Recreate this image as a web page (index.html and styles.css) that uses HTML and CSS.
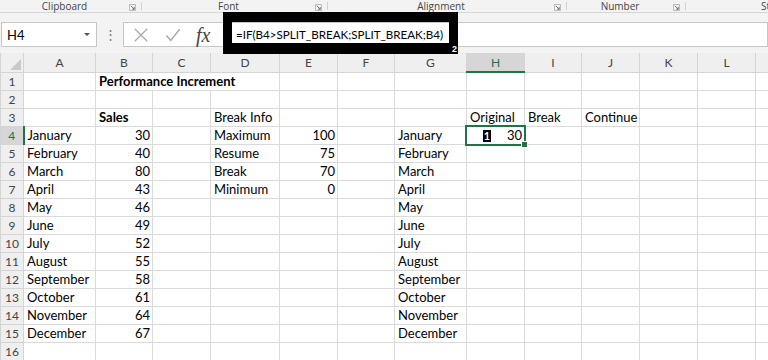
FILE: index.html
```html
<!DOCTYPE html>
<html lang="en">
  <head>
    <meta charset="UTF-8" />
    <meta name="viewport" content="width=device-width, initial-scale=1.0" />
    <title>Performance Increment - Excel</title>
    <link rel="stylesheet" href="styles.css">
  </head>
  <body>
    <div class="ribbon-labels">
      <div class="group group-clipboard">
        <span class="group-label">Clipboard</span>
        <svg class="launcher" viewBox="0 0 8 8"><path d="M0.5 0.5h7v7h-7z" fill="none" stroke="#b0b0b0"/><path d="M2 2l4 4M6 3.5v2.5h-2.5" fill="none" stroke="#666"/></svg>
      </div>
      <div class="group group-font">
        <span class="group-label">Font</span>
        <svg class="launcher" viewBox="0 0 8 8"><path d="M0.5 0.5h7v7h-7z" fill="none" stroke="#b0b0b0"/><path d="M2 2l4 4M6 3.5v2.5h-2.5" fill="none" stroke="#666"/></svg>
      </div>
      <div class="group group-alignment">
        <span class="group-label">Alignment</span>
        <svg class="launcher" viewBox="0 0 8 8"><path d="M0.5 0.5h7v7h-7z" fill="none" stroke="#b0b0b0"/><path d="M2 2l4 4M6 3.5v2.5h-2.5" fill="none" stroke="#666"/></svg>
      </div>
      <div class="group group-number">
        <span class="group-label">Number</span>
        <svg class="launcher" viewBox="0 0 8 8"><path d="M0.5 0.5h7v7h-7z" fill="none" stroke="#b0b0b0"/><path d="M2 2l4 4M6 3.5v2.5h-2.5" fill="none" stroke="#666"/></svg>
      </div>
      <div class="group group-styles">
        <span class="group-label">Styles</span>
      </div>
    </div>

    <div class="formula-row">
      <div class="name-box">
        <span>H4</span>
        <span class="name-arrow"></span>
      </div>
      <div class="grip">&#8942;</div>
      <div class="fx-buttons">
        <svg class="fx-icon" viewBox="0 0 18 18"><path d="M2 2l14 14M16 2L2 16" stroke="#a8a8a8" stroke-width="1.4" fill="none"/></svg>
        <svg class="fx-icon" viewBox="0 0 18 18"><path d="M1.5 9.5l5 5.5L16.5 2.5" stroke="#a8a8a8" stroke-width="1.6" fill="none"/></svg>
        <span class="fx-text">fx</span>
      </div>
      <div class="formula-input">=IF(B4&gt;SPLIT_BREAK;SPLIT_BREAK;B4)</div>
      <div class="callout"><span class="callout-num">2</span></div>
    </div>

    <div class="sheet-wrap">
      <table class="sheet">
        <colgroup>
          <col class="c-head" />
          <col style="width:72px" />
          <col style="width:57px" />
          <col style="width:58px" />
          <col style="width:69px" />
          <col style="width:58px" />
          <col style="width:57px" />
          <col style="width:72px" />
          <col style="width:58px" />
          <col style="width:57px" />
          <col style="width:58px" />
          <col style="width:58px" />
          <col style="width:58px" />
          <col style="width:58px" />
        </colgroup>
        <tr class="col-heads">
          <th class="corner"><span class="corner-tri"></span></th>
          <th>A</th><th>B</th><th>C</th><th>D</th><th>E</th><th>F</th><th>G</th>
          <th class="active">H</th><th>I</th><th>J</th><th>K</th><th>L</th><th>M</th>
        </tr>
        <tr>
          <th>1</th><td></td><td colspan="3" class="bold">Performance Increment</td><td></td><td></td><td></td><td></td><td></td><td></td><td></td><td></td><td></td>
        </tr>
        <tr>
          <th>2</th><td></td><td></td><td></td><td></td><td></td><td></td><td></td><td></td><td></td><td></td><td></td><td></td><td></td>
        </tr>
        <tr>
          <th>3</th><td></td><td class="bold">Sales</td><td></td><td>Break Info</td><td></td><td></td><td></td><td>Original</td><td>Break</td><td>Continue</td><td></td><td></td><td></td>
        </tr>
        <tr>
          <th class="active">4</th><td>January</td><td class="num">30</td><td></td><td>Maximum</td><td class="num">100</td><td></td><td>January</td>
          <td class="num selected">30<span class="marker">1</span><span class="sel-box"><span class="sel-handle"></span></span></td><td></td><td></td><td></td><td></td><td></td>
        </tr>
        <tr>
          <th>5</th><td>February</td><td class="num">40</td><td></td><td>Resume</td><td class="num">75</td><td></td><td>February</td><td></td><td></td><td></td><td></td><td></td><td></td>
        </tr>
        <tr>
          <th>6</th><td>March</td><td class="num">80</td><td></td><td>Break</td><td class="num">70</td><td></td><td>March</td><td></td><td></td><td></td><td></td><td></td><td></td>
        </tr>
        <tr>
          <th>7</th><td>April</td><td class="num">43</td><td></td><td>Minimum</td><td class="num">0</td><td></td><td>April</td><td></td><td></td><td></td><td></td><td></td><td></td>
        </tr>
        <tr>
          <th>8</th><td>May</td><td class="num">46</td><td></td><td></td><td></td><td></td><td>May</td><td></td><td></td><td></td><td></td><td></td><td></td>
        </tr>
        <tr>
          <th>9</th><td>June</td><td class="num">49</td><td></td><td></td><td></td><td></td><td>June</td><td></td><td></td><td></td><td></td><td></td><td></td>
        </tr>
        <tr>
          <th>10</th><td>July</td><td class="num">52</td><td></td><td></td><td></td><td></td><td>July</td><td></td><td></td><td></td><td></td><td></td><td></td>
        </tr>
        <tr>
          <th>11</th><td>August</td><td class="num">55</td><td></td><td></td><td></td><td></td><td>August</td><td></td><td></td><td></td><td></td><td></td><td></td>
        </tr>
        <tr>
          <th>12</th><td>September</td><td class="num">58</td><td></td><td></td><td></td><td></td><td>September</td><td></td><td></td><td></td><td></td><td></td><td></td>
        </tr>
        <tr>
          <th>13</th><td>October</td><td class="num">61</td><td></td><td></td><td></td><td></td><td>October</td><td></td><td></td><td></td><td></td><td></td><td></td>
        </tr>
        <tr>
          <th>14</th><td>November</td><td class="num">64</td><td></td><td></td><td></td><td></td><td>November</td><td></td><td></td><td></td><td></td><td></td><td></td>
        </tr>
        <tr>
          <th>15</th><td>December</td><td class="num">67</td><td></td><td></td><td></td><td></td><td>December</td><td></td><td></td><td></td><td></td><td></td><td></td>
        </tr>
        <tr>
          <th>16</th><td></td><td></td><td></td><td></td><td></td><td></td><td></td><td></td><td></td><td></td><td></td><td></td><td></td>
        </tr>
      </table>
    </div>
  </body>
</html>
```

FILE: styles.css
```css
body {
  margin: 0;
  width: 768px;
  height: 360px;
  overflow: hidden;
  background-color: #f3f3f3;
  font-family: Lato, "Liberation Sans", sans-serif;
  color: #000;
}
.ribbon-labels {
  display: flex;
  height: 12px;
  border-bottom: 1px solid #d6d6d6;
  font-family: "Open Sans", "Liberation Sans", sans-serif;
  font-size: 10px;
  color: #444;
  white-space: nowrap;
}
.group {
  display: flex;
  align-items: center;
  flex-shrink: 0;
  height: 12px;
  padding-right: 6px;
  box-sizing: border-box;
  position: relative;
}
.group::after {
  content: "";
  position: absolute;
  right: 0;
  top: 2px;
  height: 8px;
  border-right: 1px solid #d0d0d0;
}
.group-label {
  flex: 1;
  text-align: center;
  line-height: 12px;
}
.launcher {
  width: 7px;
  height: 7px;
  margin-top: 2px;
}
.group-clipboard { width: 142px; }
.group-font { width: 186px; }
.group-alignment { width: 239px; }
.group-number { width: 119px; }
.group-styles {
  padding-left: 75px;
}
.group-styles::after {
  display: none;
}
.formula-row {
  position: relative;
  display: flex;
  align-items: flex-start;
  height: 40px;
  padding-top: 9px;
  box-sizing: border-box;
}
.name-box {
  display: flex;
  align-items: center;
  justify-content: space-between;
  width: 96px;
  height: 25px;
  margin-left: 1px;
  padding: 0 6px 0 5px;
  box-sizing: border-box;
  background-color: #fff;
  border: 1px solid #c6c6c6;
  font-size: 13px;
}
.name-arrow {
  width: 0;
  height: 0;
  border-left: 3px solid transparent;
  border-right: 3px solid transparent;
  border-top: 3px solid #555;
}
.grip {
  width: 26px;
  text-align: center;
  color: #777;
  font-size: 13px;
  line-height: 25px;
}
.fx-buttons {
  display: flex;
  align-items: center;
  gap: 16px;
  width: 100px;
  height: 25px;
  padding-left: 9px;
  box-sizing: border-box;
  background-color: #fff;
  border: 1px solid #c6c6c6;
  border-right: none;
}
.fx-icon {
  width: 16px;
  height: 16px;
}
.fx-text {
  font-family: "Liberation Serif", serif;
  font-style: italic;
  font-size: 20px;
  color: #444;
  line-height: 20px;
  margin-left: -1px;
}
.formula-input {
  flex: 1;
  height: 23px;
  padding-left: 12px;
  border: 1px solid #c6c6c6;
  background-color: #fff;
  font-size: 11.6px;
  line-height: 23px;
  white-space: nowrap;
}
.callout {
  position: absolute;
  left: 223px;
  top: -1px;
  width: 217px;
  height: 21px;
  border-style: solid;
  border-color: #000;
  border-width: 10px 9px 11px 9px;
}
.callout-num {
  position: absolute;
  right: -8px;
  bottom: -11px;
  color: #fff;
  font-family: "Liberation Sans", sans-serif;
  font-weight: bold;
  font-size: 9px;
  line-height: 10px;
}
.sheet-wrap {
  width: 768px;
  overflow: hidden;
}
.sheet {
  border-collapse: collapse;
  table-layout: fixed;
  width: 812px;
  background-color: #fff;
  font-size: 13px;
}
.c-head {
  width: 23px;
}
.sheet th {
  background-color: #efefef;
  border: 1px solid #d4d4d4;
  font-weight: normal;
  font-size: 12px;
  color: #444;
  padding: 0;
  height: 17px;
  line-height: 17px;
  text-align: center;
}
.col-heads th {
  height: 18px;
  border-top: none;
}
.sheet th.active {
  background-color: #d6d6d6;
  color: #217346;
}
tr th.active {
  border-right: 2px solid #217346;
}
.col-heads th.active {
  border-right: 1px solid #d4d4d4;
  border-bottom: 2px solid #217346;
}
.corner {
  position: relative;
}
.corner-tri {
  position: absolute;
  right: 2px;
  bottom: 2px;
  width: 0;
  height: 0;
  border-left: 11px solid transparent;
  border-bottom: 11px solid #c9c9c9;
}
.sheet td {
  border: 1px solid #dadada;
  height: 17px;
  padding: 0 3px;
  line-height: 17px;
  vertical-align: bottom;
  white-space: nowrap;
}
.sheet td.num {
  text-align: right;
  padding-right: 2px;
}
.sheet td.bold {
  font-weight: bold;
}
.selected {
  position: relative;
}
.sel-box {
  position: absolute;
  left: -2px;
  top: -2px;
  right: -2px;
  bottom: -2px;
  border: 2px solid #217346;
}
.sel-handle {
  position: absolute;
  right: -4px;
  bottom: -4px;
  width: 5px;
  height: 5px;
  background-color: #217346;
  border: 1px solid #fff;
}
.marker {
  position: absolute;
  left: 16px;
  top: 3px;
  width: 8px;
  height: 12px;
  background-color: #000;
  color: #fff;
  font-weight: bold;
  font-size: 11px;
  line-height: 12px;
  text-align: center;
}
```
